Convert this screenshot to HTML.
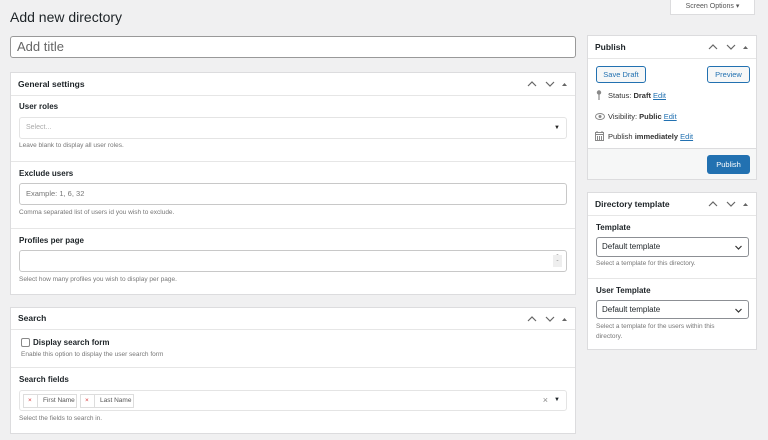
<!DOCTYPE html>
<html><head><style>
*{box-sizing:border-box;margin:0;padding:0}
body{width:768px;height:440px;background:#f0f0f1;font-family:"Liberation Sans",sans-serif;color:#1d2327;position:relative;overflow:hidden;font-size:8px}
.a{position:absolute}
.box{position:absolute;background:#fff;border:1px solid #dcdcde}
.hd{position:absolute;left:0;right:0;top:0;border-bottom:1px solid #e6e6e6;font-weight:bold;font-size:8.5px;padding-left:7px}
.lbl{position:absolute;font-weight:bold;font-size:8px}
.help{position:absolute;font-size:6.5px;color:#777}
.inp{position:absolute;border:1px solid #c8c8c8;border-radius:3px;background:#fff}
.sep{position:absolute;left:0;right:0;border-top:1px solid #e6e6e6}
.arr{position:absolute;right:8px;top:7px}
a{color:#2271b1;text-decoration:underline}
.chip{position:absolute;top:3px;height:14px;border:1px solid #ddd;font-size:6.5px;line-height:12px;color:#555;padding-left:4px}
.chip i{font-style:normal;color:#d63638;display:inline-block;width:10px;border-right:1px solid #ddd;margin-right:5px}
</style></head><body>
<div class="a" style="left:670px;top:-1px;width:85px;height:16px;background:#fff;border:1px solid #dcdcde;font-size:7px;color:#555;text-align:center;line-height:14px">Screen Options ▾</div>
<div class="a" style="left:10px;top:9px;font-size:14px;">Add new directory</div>
<div class="inp" style="left:10px;top:36px;width:566px;height:22px;border-color:#999;font-size:13px;color:#666;padding-left:6px;line-height:20px">Add title</div>

<div class="box" style="left:10px;top:72px;width:566px;height:223px">
<div class="hd" style="height:23px;line-height:22px">General settings</div>
<svg class="arr" width="40" height="8" viewBox="0 0 40 8"><path d="M1 6L5 2L9 6M19 2L23 6L27 2" fill="none" stroke="#666" stroke-width="1.2"/><path d="M35 6L37.5 3L40 6Z" fill="#666"/></svg>
<div class="lbl" style="left:8px;top:29px">User roles</div>
<div class="inp" style="left:8px;top:44px;width:548px;height:22px;border-color:#e4e4e4;color:#aaa;font-size:7px;padding-left:6px;line-height:20px">Select...<span style="position:absolute;right:6px;color:#222;font-size:6px">▼</span></div>
<div class="help" style="left:8px;top:69px">Leave blank to display all user roles.</div>
<div class="sep" style="top:88px"></div>
<div class="lbl" style="left:8px;top:96px">Exclude users</div>
<div class="inp" style="left:8px;top:110px;width:548px;height:22px;color:#777;font-size:7.5px;padding-left:6px;line-height:20px">Example: 1, 6, 32</div>
<div class="help" style="left:8px;top:136px">Comma separated list of users id you wish to exclude.</div>
<div class="sep" style="top:155px"></div>
<div class="lbl" style="left:8px;top:163px">Profiles per page</div>
<div class="inp" style="left:8px;top:177px;width:548px;height:22px"><span style="position:absolute;right:4px;top:4px;width:9px;height:12px;background:#eee;font-size:6px;color:#888;text-align:center;line-height:6px">ˆ<br>ˇ</span></div>
<div class="help" style="left:8px;top:203px">Select how many profiles you wish to display per page.</div>
</div>

<div class="box" style="left:10px;top:307px;width:566px;height:127px">
<div class="hd" style="height:22px;line-height:21px">Search</div>
<svg class="arr" width="40" height="8" viewBox="0 0 40 8"><path d="M1 6L5 2L9 6M19 2L23 6L27 2" fill="none" stroke="#666" stroke-width="1.2"/><path d="M35 6L37.5 3L40 6Z" fill="#666"/></svg>
<div class="a" style="left:10px;top:30px;width:9px;height:9px;border:1px solid #888;border-radius:2px"></div>
<div class="lbl" style="left:22px;top:30px">Display search form</div>
<div class="help" style="left:10px;top:43px">Enable this option to display the user search form</div>
<div class="sep" style="top:59px"></div>
<div class="lbl" style="left:8px;top:67px">Search fields</div>
<div class="inp" style="left:8px;top:82px;width:548px;height:21px;border-color:#e4e4e4">
<span class="chip" style="left:3px;width:54px"><i>×</i>First Name</span>
<span class="chip" style="left:60px;width:54px"><i>×</i>Last Name</span>
<span class="a" style="right:18px;top:4px;color:#888;font-size:9px">×</span><span class="a" style="right:6px;top:6px;font-size:6px">▼</span></div>
<div class="help" style="left:8px;top:107px">Select the fields to search in.</div>
</div>

<div class="box" style="left:587px;top:35px;width:170px;height:145px">
<div class="hd" style="height:23px;line-height:22px">Publish</div>
<svg class="arr" width="40" height="8" viewBox="0 0 40 8"><path d="M1 6L5 2L9 6M19 2L23 6L27 2" fill="none" stroke="#666" stroke-width="1.2"/><path d="M35 6L37.5 3L40 6Z" fill="#666"/></svg>
<div class="a" style="left:8px;top:30px;width:50px;height:17px;border:1px solid #2271b1;border-radius:3px;color:#2271b1;font-size:7.5px;text-align:center;line-height:15px;background:#f6f7f7">Save Draft</div>
<div class="a" style="left:119px;top:30px;width:43px;height:17px;border:1px solid #2271b1;border-radius:3px;color:#2271b1;font-size:7.5px;text-align:center;line-height:15px;background:#f6f7f7">Preview</div>
<svg class="a" style="left:8px;top:54px" width="6" height="10" viewBox="0 0 6 10"><circle cx="3" cy="2.5" r="2.2" fill="#888"/><path d="M3 4V10" stroke="#888" stroke-width="1.2"/></svg>
<div class="a" style="left:20px;top:55px;font-size:7.5px;color:#333">Status: <b>Draft</b> <a>Edit</a></div>
<svg class="a" style="left:7px;top:77px" width="10" height="7" viewBox="0 0 10 7"><ellipse cx="5" cy="3.5" rx="4.5" ry="3" fill="none" stroke="#888"/><circle cx="5" cy="3.5" r="1.5" fill="#888"/></svg>
<div class="a" style="left:20px;top:76px;font-size:7.5px;color:#333">Visibility: <b>Public</b> <a>Edit</a></div>
<svg class="a" style="left:7px;top:95px" width="9" height="10" viewBox="0 0 9 10"><rect x="0.5" y="1.5" width="8" height="8" fill="none" stroke="#888"/><path d="M0.5 3.5H8.5M2.5 5V9M4.5 5V9M6.5 5V9M2 0V2M7 0V2" stroke="#888"/></svg>
<div class="a" style="left:20px;top:96px;font-size:7.5px;color:#333">Publish <b>immediately</b> <a>Edit</a></div>
<div class="a" style="left:0;right:0;top:112px;bottom:0;background:#f6f7f7;border-top:1px solid #dcdcde"></div>
<div class="a" style="left:119px;top:119px;width:43px;height:19px;background:#2271b1;border-radius:3px;color:#fff;font-size:7.5px;text-align:center;line-height:19px">Publish</div>
</div>

<div class="box" style="left:587px;top:192px;width:170px;height:158px">
<div class="hd" style="height:23px;line-height:22px">Directory template</div>
<svg class="arr" width="40" height="8" viewBox="0 0 40 8"><path d="M1 6L5 2L9 6M19 2L23 6L27 2" fill="none" stroke="#666" stroke-width="1.2"/><path d="M35 6L37.5 3L40 6Z" fill="#666"/></svg>
<div class="lbl" style="left:8px;top:30px">Template</div>
<div class="inp" style="left:8px;top:44px;width:153px;height:20px;border-color:#8c8f94;font-size:8px;padding-left:5px;line-height:18px">Default template<svg style="position:absolute;right:6px;top:7px" width="7" height="5" viewBox="0 0 7 5"><path d="M0.5 1L3.5 4L6.5 1" fill="none" stroke="#333" stroke-width="1.2"/></svg></div>
<div class="help" style="left:8px;top:67px">Select a template for this directory.</div>
<div class="sep" style="top:85px"></div>
<div class="lbl" style="left:8px;top:93px">User Template</div>
<div class="inp" style="left:8px;top:107px;width:153px;height:19px;border-color:#8c8f94;font-size:8px;padding-left:5px;line-height:17px">Default template<svg style="position:absolute;right:6px;top:7px" width="7" height="5" viewBox="0 0 7 5"><path d="M0.5 1L3.5 4L6.5 1" fill="none" stroke="#333" stroke-width="1.2"/></svg></div>
<div class="help" style="left:8px;top:129px;line-height:10px">Select a template for the users within this<br>directory.</div>
</div>
</body></html>
